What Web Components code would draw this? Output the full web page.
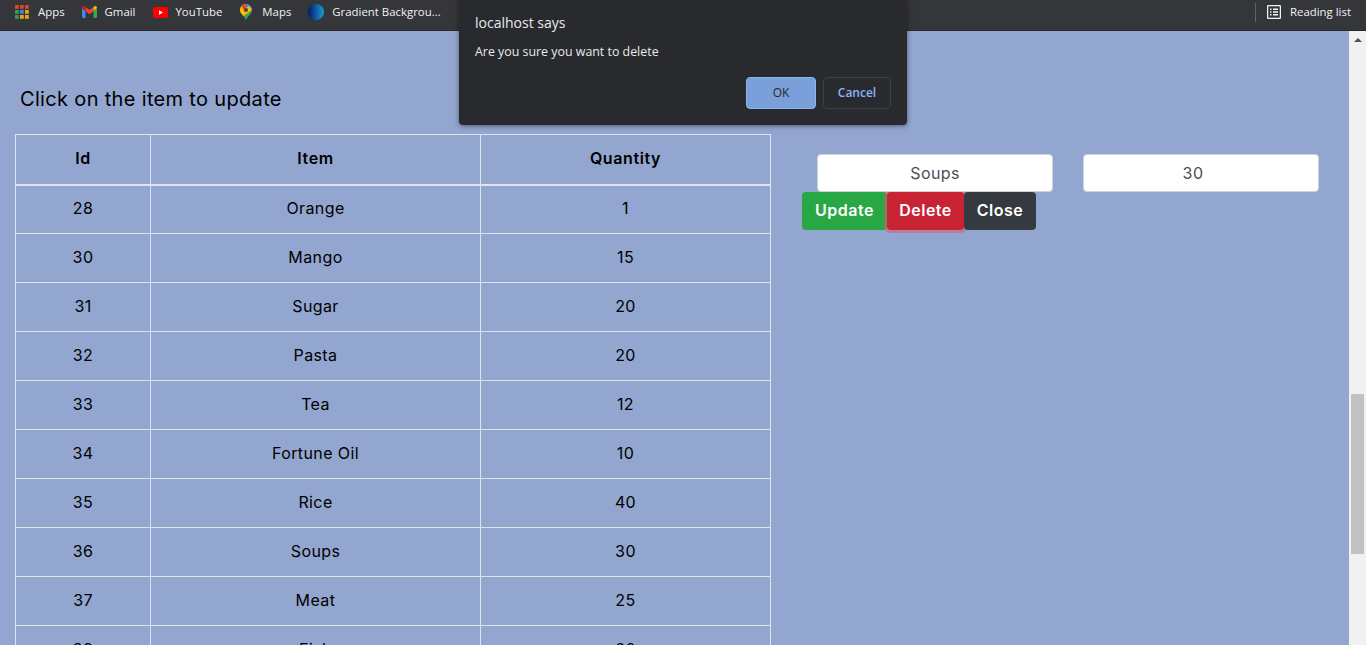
<!DOCTYPE html>
<html lang="en">
<head>
<meta charset="utf-8">
<title>Inventory</title>
<style>
  html, body { margin: 0; height: 100%; overflow: hidden; }
  body { background: #93a6d0; font-family: "Inter", "Open Sans", sans-serif; }
  #window { display: flex; flex-direction: column; height: 645px; position: relative; }
  #content { display: flex; flex: 1; min-height: 0; }
</style>
</head>
<body>
<div id="window">
  <bookmarks-bar></bookmarks-bar>
  <div id="content">
    <inventory-page></inventory-page>
    <page-scrollbar></page-scrollbar>
  </div>
  <alert-dialog title="localhost says" message="Are you sure you want to delete"></alert-dialog>
</div>

<script>
class BookmarksBar extends HTMLElement {
  constructor() {
    super()
    this.shadow = this.attachShadow({ mode: 'open' })
  }

  connectedCallback() {
    this.shadow.innerHTML = `
      <style>
        :host {
          display: flex;
          align-items: center;
          height: 31px;
          box-sizing: border-box;
          padding: 0 15px 6px 15px;
          background: #35363a;
          border-bottom: 1px solid #2a2b2e;
          color: #f1f3f4;
          font: 11.400px "Open Sans", "Noto Sans", sans-serif;
        }
        .mark { display: flex; align-items: center; gap: 8px; margin-right: 17px; white-space: nowrap; }
        span { margin-bottom: 2px; }
        svg { display: block; flex: none; }
        .spacer { flex: 1; }
        .sep { width: 1px; height: 19px; background: #5f6368; margin-right: 11px; }
        .reading { display: flex; align-items: center; gap: 9px; }
      </style>
      <div class="mark" style="gap:9px">
        <svg width="14" height="14" viewBox="0 0 14 14">
          <rect x="0" y="0" width="3.800" height="3.800" fill="#d6452f"/><rect x="5" y="0" width="3.800" height="3.800" fill="#d6452f"/><rect x="10" y="0" width="3.800" height="3.800" fill="#d6452f"/>
          <rect x="0" y="5" width="3.800" height="3.800" fill="#3c9a52"/><rect x="5" y="5" width="3.800" height="3.800" fill="#3f82e8"/><rect x="10" y="5" width="3.800" height="3.800" fill="#e8a612"/>
          <rect x="0" y="10" width="3.800" height="3.800" fill="#3c9a52"/><rect x="5" y="10" width="3.800" height="3.800" fill="#e8a612"/><rect x="10" y="10" width="3.800" height="3.800" fill="#e8a612"/>
        </svg>
        <span>Apps</span>
      </div>
      <div class="mark">
        <svg width="15" height="12" viewBox="0 0 15 12">
          <path d="M0 2v8.800C0 11.500.5 12 1.200 12H3.500V5.200z" fill="#4285f4"/>
          <path d="M15 2v8.800c0 .7-.5 1.200-1.200 1.200H11.500V5.200z" fill="#34a853"/>
          <path d="M3.500 5.200V1L7.500 4 11.500 1v4.200L7.500 8.200z" fill="#ea4335"/>
          <path d="M0 2C0 .4 1.800-.5 3 .4L3.500 1v4.200z" fill="#c5221f"/>
          <path d="M15 2c0-1.600-1.800-2.500-3-1.600L11.500 1v4.200z" fill="#fbbc04"/>
        </svg>
        <span>Gmail</span>
      </div>
      <div class="mark" style="margin-right:18px">
        <svg width="15" height="11" viewBox="0 0 15 11">
          <rect width="15" height="11" rx="2.500" fill="#f00"/>
          <path d="M6 3.200v4.600L10 5.500z" fill="#fff"/>
        </svg>
        <span>YouTube</span>
      </div>
      <div class="mark" style="gap:10px">
        <svg width="12" height="16" viewBox="0 0 12 16">
          <defs><clipPath id="pin"><path d="M6 0a6 6 0 0 1 6 6c0 3.500-4 5.500-6 10-2-4.500-6-6.500-6-10a6 6 0 0 1 6-6z"/></clipPath></defs>
          <g clip-path="url(#pin)">
            <rect width="12" height="16" fill="#34a853"/>
            <path d="M0 0h6L6 6 0 9z" fill="#fbbc04"/>
            <path d="M1 1L6 0 9 2 4 7z" fill="#ea4335"/>
            <path d="M6 0h6v6L9 8 6 3z" fill="#4285f4"/>
            <path d="M0 8l9-6 3 4-10 7z" fill="#fbbc04"/>
          </g>
          <circle cx="6" cy="6" r="2" fill="#5f3a1c"/>
        </svg>
        <span>Maps</span>
      </div>
      <div class="mark" style="margin-right:18px">
        <svg width="16" height="16" viewBox="0 0 16 16">
          <defs><linearGradient id="grad"><stop offset="0" stop-color="#021a6e"/><stop offset="1" stop-color="#1c9ad0"/></linearGradient></defs>
          <circle cx="8" cy="8" r="8" fill="url(#grad)"/>
        </svg>
        <span>Gradient Backgrou...</span>
      </div>
      <svg width="4" height="14" viewBox="0 0 4 14"><rect width="4" height="14" fill="#0f7fb8"/></svg>
      <div class="spacer"></div>
      <div class="sep"></div>
      <div class="reading">
        <svg width="14" height="14" viewBox="0 0 14 14" fill="none" stroke="#f1f3f4">
          <rect x=".6" y=".6" width="12.800" height="12.800" rx="1" stroke-width="1.300"/>
          <path d="M3 4.200h1.500M6 4.200h5M3 7h1.500M6 7h5M3 9.800h1.500M6 9.800h5" stroke-width="1.500"/>
        </svg>
        <span>Reading list</span>
      </div>
    `
  }
}

class AlertDialog extends HTMLElement {
  constructor() {
    super()
    this.shadow = this.attachShadow({ mode: 'open' })
  }

  connectedCallback() {
    this.shadow.innerHTML = `
      <style>
        :host {
          position: absolute;
          left: 459px;
          top: 0;
          width: 448px;
          height: 125px;
          box-sizing: border-box;
          padding: 14px 16px 16px 16px;
          display: flex;
          flex-direction: column;
          background: #292a2d;
          border-radius: 0 0 4px 4px;
          box-shadow: 0 1px 5px rgba(0, 0, 0, .45);
          color: #e8eaed;
          font-family: "Open Sans", "Noto Sans", sans-serif;
        }
        h2 { margin: 0; font-size: 14px; font-weight: 400; line-height: 17px; }
        p { margin: 12px 0 0; font-size: 12.400px; line-height: 17px; }
        .actions { margin-top: auto; display: flex; justify-content: flex-end; gap: 7px; }
        button {
          height: 32px;
          box-sizing: border-box;
          border-radius: 4px;
          font: 600 12px "Open Sans", "Noto Sans", sans-serif;
          padding: 0 0 2px;
        }
        .ok { width: 70px; background: #7a9fd9; border: 1px solid #8ab4f8; color: #292a2d; font-weight: 400; }
        .cancel { width: 68px; background: #292a2d; border: 1px solid #3c4043; color: #8ab4f8; }
      </style>
      <h2>${this.getAttribute('title')}</h2>
      <p>${this.getAttribute('message')}</p>
      <div class="actions">
        <button class="ok">OK</button>
        <button class="cancel">Cancel</button>
      </div>
    `
  }
}

class ItemsTable extends HTMLElement {
  constructor() {
    super()
    this.shadow = this.attachShadow({ mode: 'open' })
    this.items = [
      [28, 'Orange', 1], [30, 'Mango', 15], [31, 'Sugar', 20], [32, 'Pasta', 20],
      [33, 'Tea', 12], [34, 'Fortune Oil', 10], [35, 'Rice', 40], [36, 'Soups', 30],
      [37, 'Meat', 25], [38, 'Fish', 60]
    ]
  }

  connectedCallback() {
    const rows = this.items.map(i => `<tr><td>${i[0]}</td><td>${i[1]}</td><td>${i[2]}</td></tr>`).join('')
    this.shadow.innerHTML = `
      <style>
        :host { display: block; width: 756px; flex: none; }
        table { border-collapse: collapse; width: 755px; table-layout: fixed; color: #000; font-size: 16px; letter-spacing: .4px; }
        th, td { height: 49px; box-sizing: border-box; padding: 0 0 2px; border: 1px solid #dde3ef; text-align: center; vertical-align: middle; }
        th { font-weight: 600; border-bottom-width: 2px; height: 50px; letter-spacing: .6px; }
      </style>
      <table>
        <colgroup><col style="width:135px"><col style="width:330px"><col style="width:290px"></colgroup>
        <thead><tr><th>Id</th><th>Item</th><th>Quantity</th></tr></thead>
        <tbody>${rows}</tbody>
      </table>
    `
  }
}

class EditForm extends HTMLElement {
  constructor() {
    super()
    this.shadow = this.attachShadow({ mode: 'open' })
  }

  connectedCallback() {
    this.shadow.innerHTML = `
      <style>
        :host { display: block; padding: 20px 0 0 31px; flex: none; }
        .fields { display: flex; gap: 30px; padding-left: 15px; position: relative; z-index: 1; }
        input {
          width: 236px;
          height: 38px;
          box-sizing: border-box;
          border: 1px solid #ced4da;
          border-radius: 4px;
          background: #fff;
          color: #495057;
          text-align: center;
          font: 16px "Inter", sans-serif;
          letter-spacing: .4px;
          padding: 0;
        }
        .qty { padding-right: 16px; }
        .actions { display: flex; }
        button {
          height: 38px;
          box-sizing: border-box;
          border: 1px solid transparent;
          border-radius: 4px;
          color: #fff;
          font: 600 16px "Inter", sans-serif;
          letter-spacing: .5px;
          padding: 0 0 2px;
        }
        .update { width: 85px; background: #28a745; }
        .delete { width: 77px; background: #c82333; box-shadow: 0 0 0 3px rgba(225, 83, 97, .5); }
        .close { width: 72px; background: #343a40; }
      </style>
      <div class="fields">
        <input value="Soups">
        <input class="qty" value="30">
      </div>
      <div class="actions">
        <button class="update">Update</button>
        <button class="delete">Delete</button>
        <button class="close">Close</button>
      </div>
    `
  }
}

class InventoryPage extends HTMLElement {
  constructor() {
    super()
    this.shadow = this.attachShadow({ mode: 'open' })
  }

  connectedCallback() {
    this.shadow.innerHTML = `
      <style>
        :host { display: block; flex: 1; min-width: 0; overflow: hidden; padding: 0 0 0 15px; font-family: "Inter", sans-serif; }
        h3 { margin: 0; padding: 53px 0 0 5px; height: 50px; font-size: 20px; font-weight: 400; line-height: 30px; letter-spacing: .33px; color: #000; }
        .row { display: flex; align-items: flex-start; }
      </style>
      <h3>Click on the item to update</h3>
      <div class="row">
        <items-table></items-table>
        <edit-form></edit-form>
      </div>
    `
  }
}

class PageScrollbar extends HTMLElement {
  constructor() {
    super()
    this.shadow = this.attachShadow({ mode: 'open' })
  }

  connectedCallback() {
    this.shadow.innerHTML = `
      <style>
        :host { display: block; width: 17px; flex: none; background: #f1f1f1; position: relative; }
        .arrow { width: 0; height: 0; margin: 7px auto 0; border: 4px solid transparent; border-top: 0; border-bottom: 4px solid #505050; }
        .thumb { position: absolute; left: 2px; right: 2px; top: 363px; height: 160px; background: #c1c1c1; }
      </style>
      <div class="arrow"></div>
      <div class="thumb"></div>
    `
  }
}

customElements.define('bookmarks-bar', BookmarksBar)
customElements.define('alert-dialog', AlertDialog)
customElements.define('items-table', ItemsTable)
customElements.define('edit-form', EditForm)
customElements.define('inventory-page', InventoryPage)
customElements.define('page-scrollbar', PageScrollbar)
</script>
</body>
</html>
